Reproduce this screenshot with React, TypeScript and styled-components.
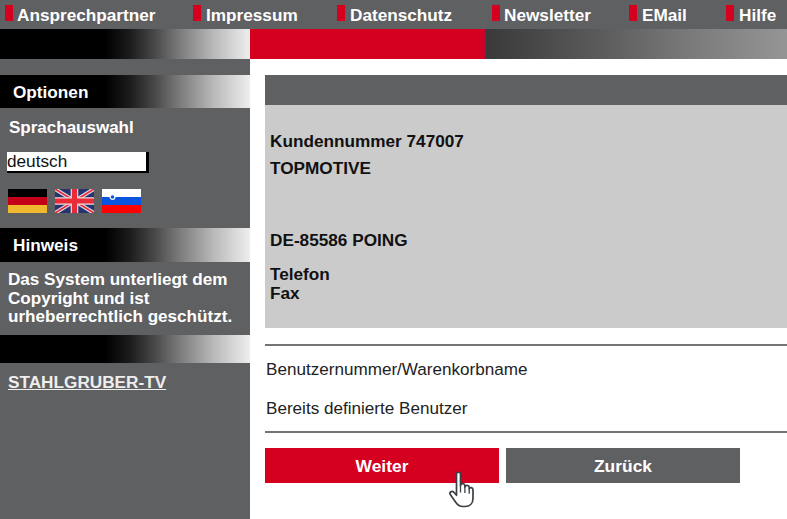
import React from 'react';
import styled, { createGlobalStyle } from 'styled-components';

const Global = createGlobalStyle`
  html, body { margin: 0; padding: 0; background: #fff; }
  body { font-family: "Liberation Sans", Arial, sans-serif; color: #111; overflow: hidden; }
`;

const Page = styled.div`
  width: 787px;
  height: 519px;
  position: relative;
  overflow: hidden;
  display: flex;
  flex-direction: column;
`;

const TopNav = styled.nav`
  height: 29px;
  background: #5f6062;
  display: flex;
  align-items: flex-start;
  flex: none;
`;

const NavItem = styled.a<{ $w: number; $gap: number }>`
  width: ${p => p.$w}px;
  flex: none;
  display: flex;
  align-items: flex-start;
  gap: ${p => p.$gap}px;
  color: #fff;
  font-weight: 700;
  font-size: 17.2px;
  line-height: 30px;
  white-space: nowrap;
`;

const NavMark = styled.span`
  display: block;
  width: 8px;
  height: 16px;
  margin-top: 5px;
  background: #d50020;
  flex: none;
`;

const NavStrip = styled.div`
  display: flex;
  padding-left: 5px;
`;

const Band = styled.div`
  height: 30px;
  display: flex;
  flex: none;
`;

const FadeBlock = styled.div<{ $h?: number }>`
  width: 250px;
  flex: none;
  height: ${p => (p.$h ? `${p.$h}px` : 'auto')};
  background: linear-gradient(90deg, #000 0%, #000 42%, #1c1c1c 52%, #444 61%, #777 71%, #bbb 86%, #eee 100%);
`;

const RedBlock = styled.div`
  width: 236px;
  background: linear-gradient(90deg, #d50020 0%, #d50020 97.5%, #c00038 100%);
  flex: none;
`;

const DarkFade = styled.div`
  flex: 1;
  background: linear-gradient(90deg, #3a3a3a 0%, #585858 35%, #7c7c7c 70%, #959595 100%);
`;

const Body = styled.div`
  flex: 1;
  display: flex;
`;

const Sidebar = styled.aside`
  width: 250px;
  flex: none;
  background: #5f6062;
  padding-top: 16px;
  display: flex;
  flex-direction: column;
`;

const SideHead = styled(FadeBlock)`
  color: #fff;
  font-weight: 700;
  font-size: 17.2px;
  padding: 1px 0 0 13px;
  box-sizing: border-box;
  display: flex;
  align-items: center;
`;

const LangBox = styled.div`
  height: 120px;
  padding: 8px 0 0 9px;
  box-sizing: border-box;
`;

const SideLabel = styled.div`
  color: #fff;
  font-weight: 700;
  font-size: 17px;
  line-height: 23px;
`;

const LangInput = styled.div`
  width: 139px;
  height: 19px;
  margin: 13px 0 0 -2px;
  background: #fff;
  border-right: 3px solid #000;
  border-bottom: 2px solid #000;
  font-size: 17.2px;
  line-height: 19px;
  color: #111;
  box-sizing: content-box;
`;

const Flags = styled.div`
  display: flex;
  gap: 8px;
  margin: 16px 0 0 -1px;
`;

const NoticeText = styled.div`
  height: 73px;
  box-sizing: border-box;
  padding: 9px 0 0 8px;
  color: #fff;
  font-weight: 700;
  font-size: 17.1px;
  line-height: 18.5px;
  white-space: nowrap;
`;

const TvLink = styled.a`
  display: block;
  margin: 10px 0 0 8px;
  color: #eee;
  font-weight: 700;
  font-size: 17.2px;
  line-height: 18px;
  text-decoration: underline;
`;

const Main = styled.main`
  flex: 1;
  padding: 16px 0 0 15px;
  display: flex;
  flex-direction: column;
`;

const MainHead = styled.div`
  height: 30px;
  background: #5f6062;
  flex: none;
`;

const CustomerPanel = styled.section`
  height: 223px;
  background: #cbcbcb;
  padding: 26px 0 0 5px;
  box-sizing: border-box;
  font-weight: 700;
  font-size: 17.2px;
  color: #111;
  flex: none;
`;

const CustLine = styled.div<{ $mt?: number }>`
  line-height: 20px;
  margin-top: ${p => p.$mt ?? 0}px;
`;

const Rule = styled.hr<{ $mt: number }>`
  border: 0;
  height: 2px;
  background: #747474;
  margin: ${p => p.$mt}px 0 0;
  flex: none;
`;

const FieldRow = styled.div<{ $mt: number }>`
  margin-top: ${p => p.$mt}px;
  padding-left: 1px;
  font-size: 17.1px;
  line-height: 20px;
  color: #222;
`;

const Buttons = styled.div`
  display: flex;
  gap: 7px;
  margin-top: 15px;
`;

const Btn = styled.button<{ $red?: boolean }>`
  width: 234px;
  height: 35px;
  border: 0;
  padding: 2px 0 0;
  background: ${p => (p.$red ? '#d50020' : '#5f6062')};
  color: #fff;
  font: 700 17.4px "Liberation Sans", Arial, sans-serif;
`;

const Pointer = styled.svg`
  position: absolute;
  left: 447px;
  top: 470px;
`;

const FlagDe = () => (
  <svg width="39" height="24" viewBox="0 0 39 24">
    <rect width="39" height="8" fill="#000" />
    <rect y="8" width="39" height="8" fill="#c40018" />
    <rect y="16" width="39" height="8" fill="#eeb92e" />
  </svg>
);

const FlagUk = () => (
  <svg width="39" height="24" viewBox="0 0 39 24">
    <rect width="39" height="24" fill="#26336e" />
    <path d="M0 0L39 24M39 0L0 24" stroke="#dcdce8" strokeWidth="4" />
    <path d="M0 0L39 24M39 0L0 24" stroke="#e8303c" strokeWidth="1.8" />
    <path d="M19.5 0V24M0 12H39" stroke="#f0dcdc" strokeWidth="7.6" />
    <path d="M19.5 0V24M0 12H39" stroke="#ea2c38" strokeWidth="5.2" />
  </svg>
);

const FlagSi = () => (
  <svg width="39" height="24" viewBox="0 0 39 24">
    <rect width="39" height="8" fill="#fff" />
    <rect y="8" width="39" height="8" fill="#0a55e0" />
    <rect y="16" width="39" height="8" fill="#ff0000" />
    <circle cx="10.5" cy="8" r="2.4" fill="#0a55e0" stroke="#fff" strokeWidth="1.2" />
  </svg>
);

const nav: [string, number, number][] = [
  ['Ansprechpartner', 188, 4],
  ['Impressum', 144, 5],
  ['Datenschutz', 155, 5],
  ['Newsletter', 137, 4],
  ['EMail', 97, 5],
  ['Hilfe', 60, 5],
];

export default function App() {
  return (
    <Page>
      <Global />
      <TopNav>
        <NavStrip>
          {nav.map(([t, w, g]) => (
            <NavItem key={t} $w={w} $gap={g}>
              <NavMark />
              {t}
            </NavItem>
          ))}
        </NavStrip>
      </TopNav>
      <Band>
        <FadeBlock />
        <RedBlock />
        <DarkFade />
      </Band>
      <Body>
        <Sidebar>
          <SideHead $h={33}>Optionen</SideHead>
          <LangBox>
            <SideLabel>Sprachauswahl</SideLabel>
            <LangInput>deutsch</LangInput>
            <Flags>
              <FlagDe />
              <FlagUk />
              <FlagSi />
            </Flags>
          </LangBox>
          <SideHead $h={34}>Hinweis</SideHead>
          <NoticeText>
            Das System unterliegt dem
            <br />
            Copyright und ist
            <br />
            urheberrechtlich geschützt.
          </NoticeText>
          <FadeBlock $h={28} />
          <TvLink>STAHLGRUBER-TV</TvLink>
        </Sidebar>
        <Main>
          <MainHead />
          <CustomerPanel>
            <CustLine>Kundennummer 747007</CustLine>
            <CustLine $mt={7}>TOPMOTIVE</CustLine>
            <CustLine $mt={52}>DE-85586 POING</CustLine>
            <CustLine $mt={14}>Telefon</CustLine>
            <CustLine $mt={-1}>Fax</CustLine>
          </CustomerPanel>
          <Rule $mt={16} />
          <FieldRow $mt={14}>Benutzernummer/Warenkorbname</FieldRow>
          <FieldRow $mt={19}>Bereits definierte Benutzer</FieldRow>
          <Rule $mt={12} />
          <Buttons>
            <Btn $red>Weiter</Btn>
            <Btn>Zurück</Btn>
          </Buttons>
        </Main>
      </Body>
      <Pointer width="30" height="40" viewBox="0 0 26 40">
        <path
          d="M7.5 4.5c0-3 4-3 4 0v11c.6-2.4 4-2.4 4.4 0v1.5c.6-2.2 4-2.2 4.3.2v1.5c.8-1.8 3.8-1.5 3.8 1v8.5c0 5-3 8.3-8 8.3h-2c-3.5 0-5.5-1.7-7.3-4.3L1.3 24.6c-1.3-2.3 1.6-4.4 3.6-2.3l2.6 3z"
          fill="#fff"
          stroke="#3a3f45"
          strokeWidth="1.7"
          strokeLinejoin="round"
        />
        <path d="M11.5 15.5v7M15.9 17v6M20.2 18.7v5" stroke="#3a3f45" strokeWidth="1.3" fill="none" />
      </Pointer>
    </Page>
  );
}
